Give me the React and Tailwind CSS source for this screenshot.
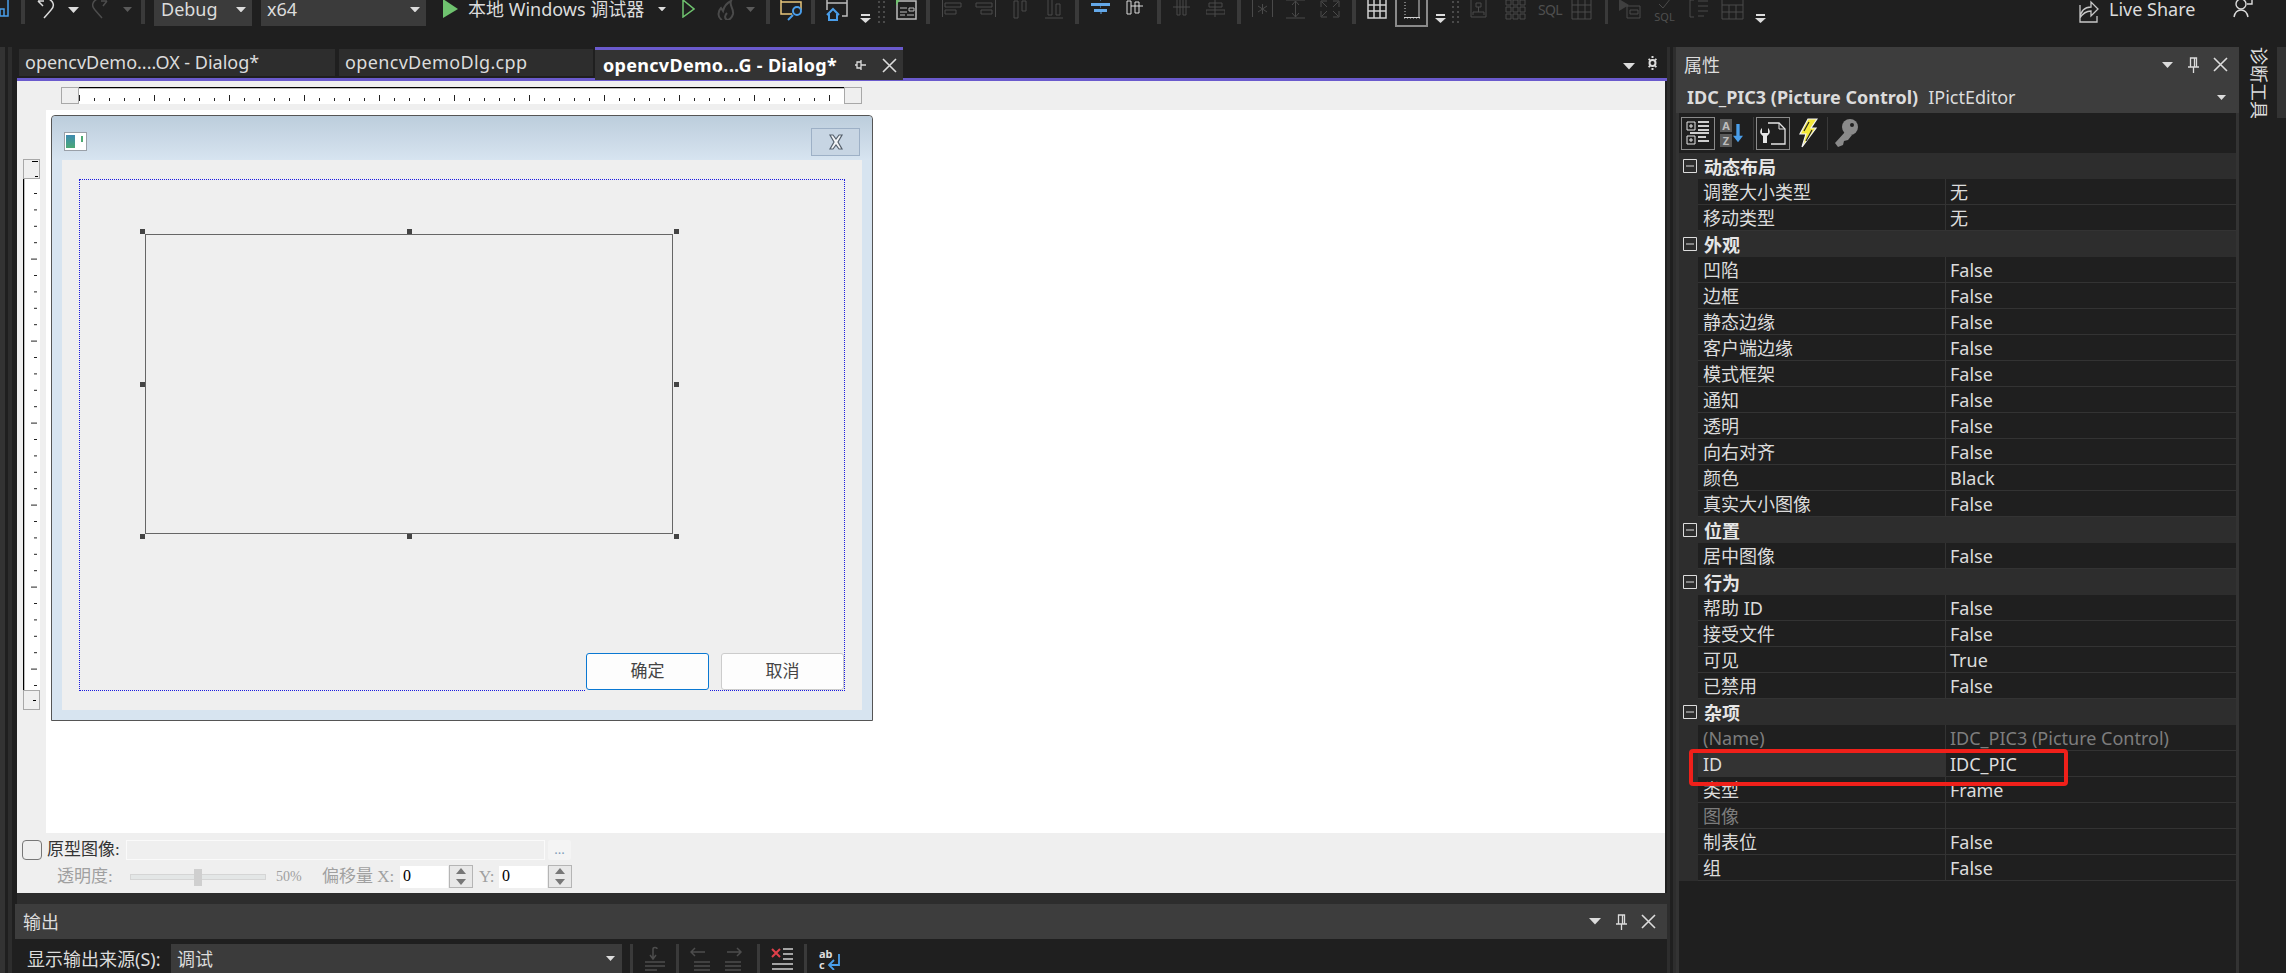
import React from 'react'

const Sep = ({ className }) => <div className={`h-[24px] bg-[#3a3a3a] shrink-0 ${className}`} />

const Caret = ({ className, color = '#dcdcdc' }) => (
  <svg viewBox="0 0 11 6" className={`shrink-0 ${className}`}>
    <path d="M0 0h11L5.5 6z" fill={color} />
  </svg>
)

// small icon wrapper, the toolbar is cropped by the top of the screen
const Ico = ({ className, w, h = 26, children }) => (
  <svg viewBox={`0 0 ${w} ${h}`} width={w} height={h} fill="none" className={`shrink-0 ${className}`}>
    {children}
  </svg>
)

const OverflowArrow = ({ className }) => (
  <Ico className={className} w={13} h={26}>
    <path d="M2 14h9v2H2z" fill="#dcdcdc" />
    <path d="M1 18h11l-5.5 5z" fill="#dcdcdc" />
  </Ico>
)

const Dots = ({ className }) => (
  <Ico className={className} w={7} h={24}>
    {[1, 6, 11, 16, 21].map((y) => (
      <g key={y} fill="#4a4a4a">
        <rect x="0" y={y} width="2" height="2" />
        <rect x="5" y={y} width="2" height="2" />
      </g>
    ))}
  </Ico>
)

const Toolbar = () => (
  <div className="flex items-start h-[47px] shrink-0 bg-[#1f1f1f] overflow-hidden">
    <Ico className="ml-0" w={9} h={18}>
      <path d="M-4 -1h12v17H-4zM0 9h4v7H0z" stroke="#4a9eea" strokeWidth="1.5" />
    </Ico>
    <Sep className="ml-[12px] w-[4px]" />
    <Ico className="ml-[12px]" w={18} h={20}>
      <path d="M1 1l5 5M1 1h6M10 -2c7 3 8 8 4 12l-7 8" stroke="#dcdcdc" strokeWidth="1.5" />
    </Ico>
    <Caret className="ml-[13px] mt-[7px] w-[11px]" />
    <Ico className="ml-[13px]" w={16} h={20}>
      <path d="M15 1l-4 5M15 1h-6M7 -2c-7 3 -8 8 -4 12l7 8" stroke="#4d4d4d" strokeWidth="1.5" />
    </Ico>
    <Caret className="ml-[15px] mt-[7px] w-[9px]" color="#5a5a5a" />
    <Sep className="ml-[9px] w-[4px]" />
    <div className="ml-[9px] w-[98px] h-[26px] bg-[#3b3b3b] flex items-start pl-[7px] text-[18px] leading-[19px] text-[#dcdcdc] shrink-0">
      <span className="flex-1">Debug</span>
      <Caret className="w-[10px] mr-[6px] mt-[7px]" />
    </div>
    <div className="ml-[9px] w-[165px] h-[26px] bg-[#3b3b3b] flex items-start pl-[6px] text-[18px] leading-[19px] text-[#dcdcdc] shrink-0">
      <span className="flex-1">x64</span>
      <Caret className="w-[10px] mr-[6px] mt-[7px]" />
    </div>
    <Ico className="ml-[17px]" w={15} h={18}>
      <path d="M0 -1l15 10L0 18z" fill="#6fc36f" />
    </Ico>
    <span className="ml-[10px] w-[180px] text-[18px] leading-[19px] text-[#dcdcdc] whitespace-nowrap shrink-0">本地 Windows 调试器</span>
    <Caret className="ml-[10px] mt-[7px] w-[8px]" />
    <Ico className="ml-[16px]" w={13} h={18}>
      <path d="M1 0l11 9L1 17z" stroke="#6fc36f" strokeWidth="1.5" />
    </Ico>
    <Ico className="ml-[21px]" w={20} h={20}>
      <path d="M6 20C1 17 2 11 5 8l2 3c1-5 4-8 8-10-2 5 3 7 2 13-1 4-4 6-6 6-3-2-2-5 0-7" stroke="#4a4a4a" strokeWidth="2" />
    </Ico>
    <Caret className="ml-[10px] mt-[7px] w-[9px]" color="#5a5a5a" />
    <Sep className="ml-[11px] w-[4px]" />
    <Ico className="ml-[10px]" w={23} h={22}>
      <path d="M1 -2v16h11M1 2h20v8" stroke="#e7c67c" strokeWidth="1.5" />
      <circle cx="17" cy="11" r="4" stroke="#4a9eea" strokeWidth="2" />
      <path d="M13 15l-5 5" stroke="#4a9eea" strokeWidth="2" />
    </Ico>
    <Sep className="ml-[8px] w-[4px]" />
    <Ico className="ml-[11px]" w={22} h={22}>
      <path d="M1 -2v12M21 -2v18h-5M1 3h20" stroke="#bdbdbd" strokeWidth="1.5" />
      <path d="M1 15l6-6 6 6M3 14v6h8v-6" stroke="#4a9eea" strokeWidth="2" />
    </Ico>
    <OverflowArrow className="ml-[11px]" />
    <Dots className="ml-[6px]" />
    <Ico className="ml-[11px]" w={21} h={20}>
      <path d="M1 1v18h19V1z" stroke="#bdbdbd" strokeWidth="1.5" />
      <path d="M4 8h7M13 8h5v3h-5zM4 12h7M4 15h5M11 15h7" stroke="#bdbdbd" />
      <path d="M-2 -2h7l-5 8z" fill="#6fc36f" />
    </Ico>
    <Sep className="ml-[9px] w-[4px]" />
    <Ico className="ml-[12px]" w={20} h={20}>
      <path d="M0.5 -1v18M3 3h16v4H3zM3 10h11v4H3z" stroke="#4a4a4a" />
    </Ico>
    <Ico className="ml-[13px]" w={21} h={20}>
      <path d="M20.5 -1v18M1 3h16v4H1zM6 10h11v4H6z" stroke="#4a4a4a" />
    </Ico>
    <Ico className="ml-[17px]" w={14} h={20}>
      <path d="M1 1h4v17H1zM9 1h4v10H9z" stroke="#4a4a4a" />
    </Ico>
    <Ico className="ml-[18px]" w={18} h={20}>
      <path d="M0 18h18M3 -1h4v16H3zM11 4h4v11h-4z" stroke="#4a4a4a" />
    </Ico>
    <Sep className="ml-[12px] w-[4px]" />
    <Ico className="ml-[12px]" w={19} h={20}>
      <path d="M0 3h19v3H0zM3 9h13v3H3z" fill="#64a9ea" />
      <path d="M9 0h1M9 7h1M9 13h2" stroke="#64a9ea" />
    </Ico>
    <Ico className="ml-[16px]" w={18} h={20}>
      <path d="M1 1v13h4V1zM5 6h12M9 2v11h4V2z" stroke="#dcdcdc" />
    </Ico>
    <Sep className="ml-[13px] w-[4px]" />
    <Ico className="ml-[12px]" w={17} h={20}>
      <path d="M4 -1h3v16H4zM10 -1h3v16h-3zM0 7h17" stroke="#4a4a4a" />
    </Ico>
    <Ico className="ml-[16px]" w={19} h={20}>
      <path d="M9 -1v18M3 3h13v4H3zM0 10h19v4H0z" stroke="#4a4a4a" />
    </Ico>
    <Sep className="ml-[12px] w-[4px]" />
    <Ico className="ml-[11px]" w={21} h={20}>
      <path d="M0.5 -1v18M20.5 -1v18M10.5 4v10M6 6l9 6M15 6l-9 6" stroke="#4a4a4a" />
    </Ico>
    <Ico className="ml-[13px]" w={19} h={20}>
      <path d="M0 0h19M0 18h19M9.5 1v16M6 5l3.5-4 3.5 4M6 13l3.5 4 3.5-4" stroke="#4a4a4a" />
    </Ico>
    <Ico className="ml-[15px]" w={20} h={20}>
      <path d="M1 7V1h6M19 7V1h-6M1 11v6h6M19 11v6h-6M2 2l5 5M18 2l-5 5M2 16l5-5M18 16l-5-5" stroke="#4a4a4a" />
    </Ico>
    <Sep className="ml-[12px] w-[4px]" />
    <Ico className="ml-[11px]" w={20} h={20}>
      <path d="M1 -1v19h18V-1zM1 5h18M1 11h18M7 -1v19M13 -1v19" stroke="#d0d0d0" strokeWidth="1.5" />
    </Ico>
    <div className="ml-[8px] w-[33px] h-[27px] border-[2px] border-t-0 border-[#8a8a8a] shrink-0 flex justify-center">
      <Ico w={18} h={20}>
        <path d="M1 18h16M2 2v14" stroke="#d0d0d0" strokeWidth="1" strokeDasharray="1 2" />
        <path d="M1 17.5h16M16 0v18" stroke="#d0d0d0" />
      </Ico>
    </div>
    <OverflowArrow className="ml-[6px]" />
    <Dots className="ml-[5px]" />
    <Ico className="ml-[11px]" w={17} h={20}>
      <path d="M1 -1v18h15V-1zM6 3h5v4H6zM3 15v-3h11v3M8.5 7v5" stroke="#4a4a4a" />
    </Ico>
    <Ico className="ml-[18px]" w={21} h={20}>
      <path d="M1 0h5v5H1zM8 0h5v5H8zM15 0h5v5h-5zM1 7h5v5H1zM8 7h5v5H8zM15 7h5v5h-5zM1 14h5v5H1zM8 14h5v5H8zM15 14h5v5h-5z" stroke="#4a4a4a" />
    </Ico>
    <span className="ml-[12px] w-[21px] text-[14px] leading-[20px] text-[#4f4f4f] shrink-0 tracking-tighter">SQL</span>
    <Ico className="ml-[12px]" w={21} h={20}>
      <path d="M1 -1v20h19V-1zM1 5h19M1 12h19M7 -1v20M14 -1v20" stroke="#4a4a4a" />
    </Ico>
    <Sep className="ml-[13px] w-[3px]" />
    <Ico className="ml-[10px]" w={26} h={22}>
      <path d="M1 -1l10 6L1 11z" fill="#3f3f3f" />
      <path d="M9 6h13v12H9zM12 10h8v4h-8z" stroke="#4a4a4a" />
    </Ico>
    <div className="ml-[10px] w-[21px] shrink-0 flex flex-col items-center">
      <Ico w={14} h={10}>
        <path d="M1 4l4 4 8-10" stroke="#4a4a4a" />
      </Ico>
      <span className="text-[11px] leading-[14px] text-[#4f4f4f]">SQL</span>
    </div>
    <Ico className="ml-[14px]" w={20} h={20}>
      <path d="M5 0H1v17h4M9 1h10M9 6h10M9 11h10M9 16h6" stroke="#4a4a4a" />
    </Ico>
    <Ico className="ml-[12px]" w={23} h={20}>
      <path d="M1 -1v20h21V-1zM1 5h21M1 12h21M8 5v14M15 5v14" stroke="#4a4a4a" />
    </Ico>
    <OverflowArrow className="ml-[10px]" />
    <Ico className="ml-[312px]" w={20} h={24}>
      <path d="M1 5v17h17v-6M1 18c1-8 6-11 11-11V2l7 7-7 7v-5c-4 0-8 2-11 7" stroke="#c8c8c8" strokeWidth="1.3" />
    </Ico>
    <span className="ml-[10px] w-[86px] text-[18px] leading-[19px] text-[#dcdcdc] whitespace-nowrap shrink-0">Live Share</span>
    <Ico className="ml-[38px]" w={20} h={18}>
      <circle cx="8" cy="4" r="5" stroke="#dcdcdc" strokeWidth="1.4" />
      <path d="M1 17c1-5 3-7 7-7s6 2 7 7M14 4h5v-5" stroke="#dcdcdc" strokeWidth="1.4" />
    </Ico>
  </div>
)

const PinIcon = ({ className }) => (
  <Ico className={className} w={11} h={16}>
    <path d="M2.5 1h6v9h-6zM0 10h11M5.5 10v6M6.5 1v9" stroke="#dcdcdc" strokeWidth="1.3" />
  </Ico>
)

const CloseIcon = ({ className, size = 15 }) => (
  <svg viewBox="0 0 15 15" width={size} height={size} className={`shrink-0 ${className}`}>
    <path d="M1 1l13 13M14 1L1 14" stroke="#dcdcdc" strokeWidth="1.6" />
  </svg>
)

const Tab = ({ className, children }) => (
  <div className={`mt-[2px] h-[27px] bg-[#2d2d2d] pl-[6px] text-[18px] leading-[27px] text-[#dcdcdc] whitespace-nowrap shrink-0 ${className}`}>
    {children}
  </div>
)

const TabStrip = () => (
  <div className="h-[34px] shrink-0 flex items-start border-b-[3px] border-[#6a5acd] bg-[#1f1f1f]">
    <Tab className="ml-[2px] w-[316px]">opencvDemo....OX - Dialog*</Tab>
    <Tab className="ml-[4px] w-[254px] tracking-[0.35px]">opencvDemoDlg.cpp</Tab>
    <div className="ml-[2px] w-[308px] h-[33px] -mb-[2px] shrink-0 relative bg-[#333333] border-t-[3px] border-[#6a5acd] flex items-center pl-[8px] text-[18px] font-bold text-white whitespace-nowrap">
      <span className="w-[252px] tracking-[0.3px]">opencvDemo...G - Dialog*</span>
      <Ico w={11} h={12} className="mr-[16px]">
        <path d="M2 3h4v6H2zM0 6h2M6 1v10M6 6h5" stroke="#dcdcdc" strokeWidth="1.3" />
      </Ico>
      <CloseIcon />
    </div>
    <Caret className="ml-[720px] mt-[16px] w-[12px]" />
    <Ico className="ml-[13px] mt-[8px]" w={9} h={16}>
      <circle cx="4.5" cy="8" r="3" stroke="#dcdcdc" strokeWidth="2" />
      <path d="M4.5 1v2M4.5 13v2M0.5 4l1.5 1M7 11l1.500 1M0.500 12L2 11M7 5l1.500-1" stroke="#dcdcdc" strokeWidth="2" />
    </Ico>
  </div>
)

const RulerTop = () => (
  <div className="ml-[44px] mt-[6px] w-[801px] h-[17px] flex bg-white shrink-0">
    <div className="w-[18px] h-[17px] bg-[#efefef] border border-[#a8a8a8] shrink-0" />
    <svg viewBox="0 0 765 17" width="765" height="17" className="shrink-0">
      <path d="M0 0.500h765" stroke="#000" strokeWidth="1.500" />
      {Array.from({ length: 51 }).map((_, i) => (
        <path key={i} d={`M${i * 15 + 0.5} ${i % 5 === 0 ? 8 : 11}V14`} stroke="#222" />
      ))}
    </svg>
    <div className="w-[18px] h-[17px] bg-[#efefef] border border-[#a8a8a8] shrink-0" />
  </div>
)

const RulerLeft = () => (
  <div className="ml-[6px] mt-[49px] w-[17px] h-[551px] flex flex-col bg-white">
    <div className="w-[17px] h-[20px] bg-[#efefef] border border-[#a8a8a8] shrink-0 flex flex-col items-end justify-between pr-[1px] py-[1px]">
      <div className="w-[6px] h-[1px] bg-black" />
      <div className="w-[3px] h-[1px] bg-black" />
    </div>
    <svg viewBox="0 0 17 511" width="17" height="511" className="shrink-0">
      <path d="M0.500 0V511" stroke="#000" strokeWidth="1.500" />
      {Array.from({ length: 32 }).map((_, i) => (
        <path key={i} d={`M${(i + 1) % 5 === 0 ? 8 : 11} ${i * 16.4 + 14.500}H14`} stroke="#222" />
      ))}
    </svg>
    <div className="w-[17px] h-[20px] bg-[#efefef] border border-[#a8a8a8] shrink-0 flex items-center justify-end pr-[3px]">
      <div className="w-[3px] h-[1px] bg-black" />
    </div>
  </div>
)

const Handle = ({ className }) => <div className={`absolute w-[5px] h-[5px] bg-[#444444] ${className}`} />

const Dialog = () => (
  <div className="ml-[5px] mt-[5px] w-[822px] h-[606px] rounded-t-[4px] border border-[#555555] bg-[#d7e4f0] flex flex-col">
    <div className="h-[44px] shrink-0 bg-gradient-to-b from-[#bccddc] to-[#d7e4f0] flex items-start rounded-t-[4px]">
      <div className="ml-[12px] mt-[16px] w-[23px] h-[19px] border border-[#9aa0a8] bg-white flex items-center px-[1px] gap-[6px]">
        <div className="w-[9px] h-[13px] bg-gradient-to-b from-[#3f8ab0] to-[#4da873]" />
        <div className="w-[2px] h-[6px] -mt-[6px] bg-[#4da873]" />
      </div>
      <div className="ml-auto mr-[12px] mt-[12px] w-[49px] h-[28px] border border-[#9db0c6] bg-[#c7d5e3] flex items-center justify-center">
        <svg viewBox="0 0 20 20" width="20" height="20">
          <path d="M4 3h3l3 4 3-4h3l-4 7 4 7h-3l-3-4-3 4H4l4-7z" fill="#f2f4f6" stroke="#55606c" strokeWidth="1.200" />
        </svg>
      </div>
    </div>
    <div className="ml-[10px] w-[800px] h-[550px] relative bg-[#efefef] font-['Liberation_Serif','Noto_Sans_CJK_SC',serif]">
      <div className="absolute left-[17px] top-[19px] w-[766px] h-[512px] border border-dotted border-[#1a1ae0]" />
      <div className="absolute left-[83px] top-[74px] w-[528px] h-[300px] border border-[#666666]" />
      <Handle className="left-[78px] top-[69px]" />
      <Handle className="left-[345px] top-[69px]" />
      <Handle className="left-[612px] top-[69px]" />
      <Handle className="left-[78px] top-[222px]" />
      <Handle className="left-[612px] top-[222px]" />
      <Handle className="left-[78px] top-[374px]" />
      <Handle className="left-[345px] top-[374px]" />
      <Handle className="left-[612px] top-[374px]" />
      <div className="absolute left-[524px] top-[493px] w-[123px] h-[37px] rounded-[3px] border border-[#0a78d2] bg-[#fdfdfd] flex items-center justify-center text-[17px] text-[#444444] [box-shadow:0_0_0_2px_#efefef]">确定</div>
      <div className="absolute left-[659px] top-[493px] w-[123px] h-[37px] rounded-[3px] border border-[#cccccc] bg-[#fdfdfd] flex items-center justify-center text-[17px] text-[#444444]">取消</div>
    </div>
  </div>
)

const Spin = ({ className }) => (
  <div className={`w-[24px] h-[23px] border border-[#b5b5b5] bg-[#e8e8e8] flex flex-col items-center justify-around shrink-0 ${className}`}>
    <svg viewBox="0 0 10 6" width="10" height="6"><path d="M0 6h10L5 0z" fill="#777777" /></svg>
    <svg viewBox="0 0 10 6" width="10" height="6"><path d="M0 0h10L5 6z" fill="#777777" /></svg>
  </div>
)

const PrototypeBar = () => (
  <div className="h-[60px] shrink-0 bg-[#efefef] text-[17px] leading-[20px] font-['Liberation_Serif','Noto_Sans_CJK_SC',serif] flex flex-col">
    <div className="mt-[7px] ml-[5px] h-[20px] flex items-center">
      <div className="w-[20px] h-[20px] rounded-[4px] border border-[#777777] shrink-0" />
      <span className="ml-[5px] w-[79px] text-[#333333] whitespace-nowrap">原型图像:</span>
      <div className="w-[419px] h-[20px] border border-[#fafafa] bg-[#efefef] shrink-0" />
      <div className="ml-[3px] w-[23px] h-[20px] rounded-[2px] bg-[#f4f4f4] text-center text-[#7f9cb8] text-[14px] leading-[20px]">...</div>
    </div>
    <div className="mt-[5px] ml-[40px] h-[23px] flex items-center text-[#a0a0a0] whitespace-nowrap">
      <span className="w-[60px]">透明度:</span>
      <div className="ml-[13px] w-[136px] h-[6px] bg-[#e3e6e6] border border-[#d5d5d5] relative shrink-0">
        <div className="absolute left-[63px] -top-[6px] w-[8px] h-[17px] bg-[#cfcfcf]" />
      </div>
      <span className="ml-[10px] w-[25px] text-[14px]">50%</span>
      <span className="ml-[21px] w-[73px]">偏移量 X:</span>
      <div className="ml-[5px] w-[48px] h-[22px] bg-white pl-[3px] text-black text-[16px] shrink-0">0</div>
      <Spin className="ml-[1px]" />
      <span className="ml-[6px] w-[12px]">Y:</span>
      <div className="ml-[8px] w-[48px] h-[22px] bg-white pl-[3px] text-black text-[16px] shrink-0">0</div>
      <Spin className="ml-[1px]" />
    </div>
  </div>
)

const OutputPanel = () => (
  <div className="flex-1 flex flex-col bg-[#2d2d2d] pt-[11px]">
    <div className="-ml-[2px] h-[35px] shrink-0 bg-[#3d3d3d] flex items-center pl-[8px] text-[18px] text-[#dcdcdc]">
      <span className="w-[36px] mt-[2px]">输出</span>
      <Caret className="ml-[1530px] w-[12px]" />
      <PinIcon className="ml-[15px]" />
      <CloseIcon className="ml-[14px]" />
    </div>
    <div className="flex-1 bg-[#1f1f1f] flex items-start overflow-hidden">
      <span className="ml-[10px] mt-[7px] w-[135px] text-[18px] leading-[26px] text-[#dcdcdc] whitespace-nowrap">显示输出来源(S):</span>
      <div className="ml-[9px] mt-[5px] w-[451px] h-[29px] bg-[#3b3b3b] flex items-center pl-[6px] text-[18px] text-[#dcdcdc] shrink-0">
        <span className="flex-1 mt-[2px]">调试</span>
        <Caret className="w-[9px] mr-[7px]" />
      </div>
      <div className="ml-[8px] mt-[5px] w-[3px] h-[29px] bg-[#3a3a3a] shrink-0" />
      <Ico className="ml-[11px] mt-[5px]" w={22} h={28}>
        <path d="M9 14V5c0-2 4-2 4 0M6 11l3 4 3-4M1 18h20M1 22h20M1 26h12" stroke="#4d4d4d" strokeWidth="1.5" />
      </Ico>
      <div className="ml-[10px] mt-[5px] w-[3px] h-[29px] bg-[#3a3a3a] shrink-0" />
      <Ico className="ml-[11px] mt-[5px]" w={22} h={28}>
        <path d="M1 8h14M5 4L1 8l4 4M4 18h16M4 22h16M4 26h16" stroke="#4d4d4d" strokeWidth="1.5" />
      </Ico>
      <Ico className="ml-[11px] mt-[5px]" w={21} h={28}>
        <path d="M4 8h14M14 4l4 4-4 4M2 18h16M2 22h16M2 26h16" stroke="#4d4d4d" strokeWidth="1.5" />
      </Ico>
      <div className="ml-[13px] mt-[5px] w-[3px] h-[29px] bg-[#3a3a3a] shrink-0" />
      <Ico className="ml-[11px] mt-[5px]" w={23} h={28}>
        <path d="M1 5l8 8M9 5l-8 8" stroke="#e0404a" strokeWidth="2" />
        <path d="M12 5h10M12 10h10M12 15h10M1 20h21M1 25h21" stroke="#d0d0d0" strokeWidth="1.5" />
      </Ico>
      <div className="ml-[10px] mt-[5px] w-[3px] h-[29px] bg-[#3a3a3a] shrink-0" />
      <div className="ml-[12px] mt-[9px] w-[22px] h-[24px] relative shrink-0 text-[11px] leading-[11px] font-bold text-[#dcdcdc]">
        ab
        <br />c
        <svg viewBox="0 0 14 16" width="14" height="16" className="absolute left-[8px] top-[6px]">
          <path d="M12 0v11H3M7 6l-5 5 5 5" fill="none" stroke="#4a9eea" strokeWidth="1.800" />
        </svg>
      </div>
    </div>
  </div>
)

const CenterColumn = () => (
  <div className="w-[1650px] shrink-0 flex flex-col">
    <TabStrip />
    <div className="w-[1648px] h-[812px] shrink-0 bg-[#efefef] flex flex-col">
      <div className="h-[29px] shrink-0 flex">
        <RulerTop />
      </div>
      <div className="h-[723px] shrink-0 flex">
        <div className="w-[29px] shrink-0">
          <RulerLeft />
        </div>
        <div className="flex-1 bg-white overflow-hidden">
          <Dialog />
        </div>
      </div>
      <PrototypeBar />
    </div>
    <OutputPanel />
  </div>
)

const sections = [
  { title: '动态布局', rows: [['调整大小类型', '无'], ['移动类型', '无']] },
  {
    title: '外观',
    rows: [
      ['凹陷', 'False'], ['边框', 'False'], ['静态边缘', 'False'], ['客户端边缘', 'False'], ['模式框架', 'False'],
      ['通知', 'False'], ['透明', 'False'], ['向右对齐', 'False'], ['颜色', 'Black'], ['真实大小图像', 'False'],
    ],
  },
  { title: '位置', rows: [['居中图像', 'False']] },
  { title: '行为', rows: [['帮助 ID', 'False'], ['接受文件', 'False'], ['可见', 'True'], ['已禁用', 'False']] },
  {
    title: '杂项',
    rows: [
      ['(Name)', 'IDC_PIC3 (Picture Control)', 'dim'],
      ['ID', 'IDC_PIC', 'selected'],
      ['类型', 'Frame'],
      ['图像', '', 'dim'],
      ['制表位', 'False'],
      ['组', 'False'],
    ],
  },
]

const PropRow = ({ name, value, state }) => (
  <div className="h-[26px] flex bg-[#2d2d2d] text-[18px] leading-[25px] whitespace-nowrap">
    <div className="w-[19px] shrink-0" />
    <div className={`w-[247px] shrink-0 pl-[5px] pt-[1px] border-b border-[#333333] ${state === 'selected' ? 'bg-[#333333]' : 'bg-[#1f1f1f]'} ${state === 'dim' ? 'text-[#7d7d7d]' : 'text-[#dcdcdc]'}`}>
      {name}
    </div>
    <div className={`flex-1 pl-[4px] pt-[1px] border-b border-l border-[#333333] bg-[#1f1f1f] ${state === 'dim' ? 'text-[#7d7d7d]' : 'text-[#dcdcdc]'}`}>
      {value}
    </div>
  </div>
)

const PropertiesPanel = () => (
  <div className="w-[563px] shrink-0 relative flex flex-col bg-[#1f1f1f] border-x-[3px] border-x-[#333333]">
    <div className="h-[35px] shrink-0 -mx-[3px] bg-[#3d3d3d] flex items-center pl-[8px] text-[18px] text-[#dcdcdc]">
      <span className="w-[36px] mt-[2px]">属性</span>
      <Caret className="ml-[442px] w-[11px]" />
      <PinIcon className="ml-[15px]" />
      <CloseIcon className="ml-[14px]" />
    </div>
    <div className="h-[31px] shrink-0 -mx-[3px] bg-[#3d3d3d] flex items-center pl-[11px] text-[18px] text-[#dcdcdc] whitespace-nowrap">
      <span className="font-bold">IDC_PIC3 (Picture Control)</span>
      <span className="ml-[10px]">IPictEditor</span>
      <Caret className="ml-auto mr-[13px] w-[9px]" />
    </div>
    <div className="h-[40px] shrink-0 flex items-center">
      <div className="ml-[2px] w-[34px] h-[33px] border border-[#8a8a8a] flex items-center justify-center shrink-0">
        <Ico w={24} h={26}>
          <path d="M1 2h8v8H1zM1 16h8v8H1z" stroke="#e6e6e6" />
          <path d="M3 6h4M5 4v4M3 20h4M5 18v4" stroke="#e6e6e6" />
          <path d="M12 2h11M12 6h11M12 10h11M4 13h19M12 17h8M12 21h11" stroke="#cfcfcf" strokeWidth="1.800" />
        </Ico>
      </div>
      <div className="ml-[5px] w-[25px] h-[28px] relative shrink-0 text-[11px] leading-[13px] font-bold text-[#bdbdbd]">
        <div className="w-[12px] text-center bg-[#5a5a5a] mb-[2px]">A</div>
        <div className="w-[12px] text-center bg-[#5a5a5a]">Z</div>
        <svg viewBox="0 0 12 24" width="10" height="20" className="absolute left-[13px] top-[5px]">
          <path d="M4 0h4v14h4l-6 8-6-8h4z" fill="#4a9eea" />
        </svg>
      </div>
      <div className="ml-[8px] w-[1px] h-[33px] bg-[#3a3a3a] shrink-0" />
      <div className="ml-[2px] w-[34px] h-[33px] border border-[#8a8a8a] flex items-center justify-center shrink-0">
        <Ico w={28} h={26}>
          <path d="M9 3h11l6 6v15H12" stroke="#e6e6e6" strokeWidth="1.300" />
          <path d="M20 3v6h6" stroke="#e6e6e6" />
          <path d="M3 8c-3 3-2 6 1 8v7h4v-7c3-2 4-5 1-8v5H3z" fill="#e6e6e6" />
        </Ico>
      </div>
      <Ico className="ml-[8px]" w={20} h={30}>
        <path d="M10 1h9l-6 9h5L4 29l4-13H2z" fill="#f4e93a" stroke="#f4f4f4" strokeWidth="1.200" />
        <path d="M11 4L6 13M14 12L8 23" stroke="#222222" strokeWidth="1.200" />
      </Ico>
      <div className="ml-[9px] w-[1px] h-[33px] bg-[#3a3a3a] shrink-0" />
      <Ico className="ml-[6px]" w={25} h={30}>
        <circle cx="16" cy="9" r="8" fill="#8a8a8a" />
        <path d="M11 14L1 25l3 4 5-2 1-4 4-1 4-5z" fill="#8a8a8a" />
        <circle cx="18" cy="7" r="2" fill="#1f1f1f" />
      </Ico>
    </div>
    <div className="flex flex-col">
      {sections.map((s) => (
        <div key={s.title}>
          <div className="h-[26px] bg-[#2d2d2d] flex items-center pl-[4px] text-[18px] font-bold text-[#e6e6e6]">
            <svg viewBox="0 0 14 14" width="14" height="14" className="shrink-0">
              <path d="M0.500 0.500h13v13h-13zM3 7h8" fill="none" stroke="#dcdcdc" />
            </svg>
            <span className="ml-[7px] mt-[2px]">{s.title}</span>
          </div>
          {s.rows.map(([n, v, st]) => (
            <PropRow key={n} name={n} value={v} state={st} />
          ))}
        </div>
      ))}
    </div>
    <div className="absolute left-[10px] top-[702px] w-[379px] h-[37px] rounded-[4px] border-[4px] border-[#f0201a]" />
  </div>
)

const App = () => (
  <div className="w-[2286px] h-[973px] bg-[#1f1f1f] overflow-hidden flex flex-col font-['Noto_Sans','Noto_Sans_CJK_SC',sans-serif]">
    <Toolbar />
    <div className="flex-1 flex min-h-0">
      <div className="w-[17px] shrink-0 flex">
        <div className="w-[5px] bg-[#333333]" />
        <div className="w-[3px]" />
        <div className="w-[4px] bg-[#2d2d2d]" />
      </div>
      <CenterColumn />
      <div className="w-[9px] shrink-0 flex">
        <div className="w-[3px] bg-[#2d2d2d]" />
        <div className="w-[3px]" />
        <div className="w-[3px] bg-[#2d2d2d]" />
      </div>
      <PropertiesPanel />
      <div className="flex-1 flex items-start">
        <div className="ml-[10px] w-[19px] [writing-mode:vertical-rl] [text-orientation:sideways] text-[18px] leading-[19px] text-[#dcdcdc] whitespace-nowrap">诊断工具</div>
        <div className="ml-[9px] w-[9px] h-[71px] bg-[#333333]" />
      </div>
    </div>
  </div>
)

export default App
